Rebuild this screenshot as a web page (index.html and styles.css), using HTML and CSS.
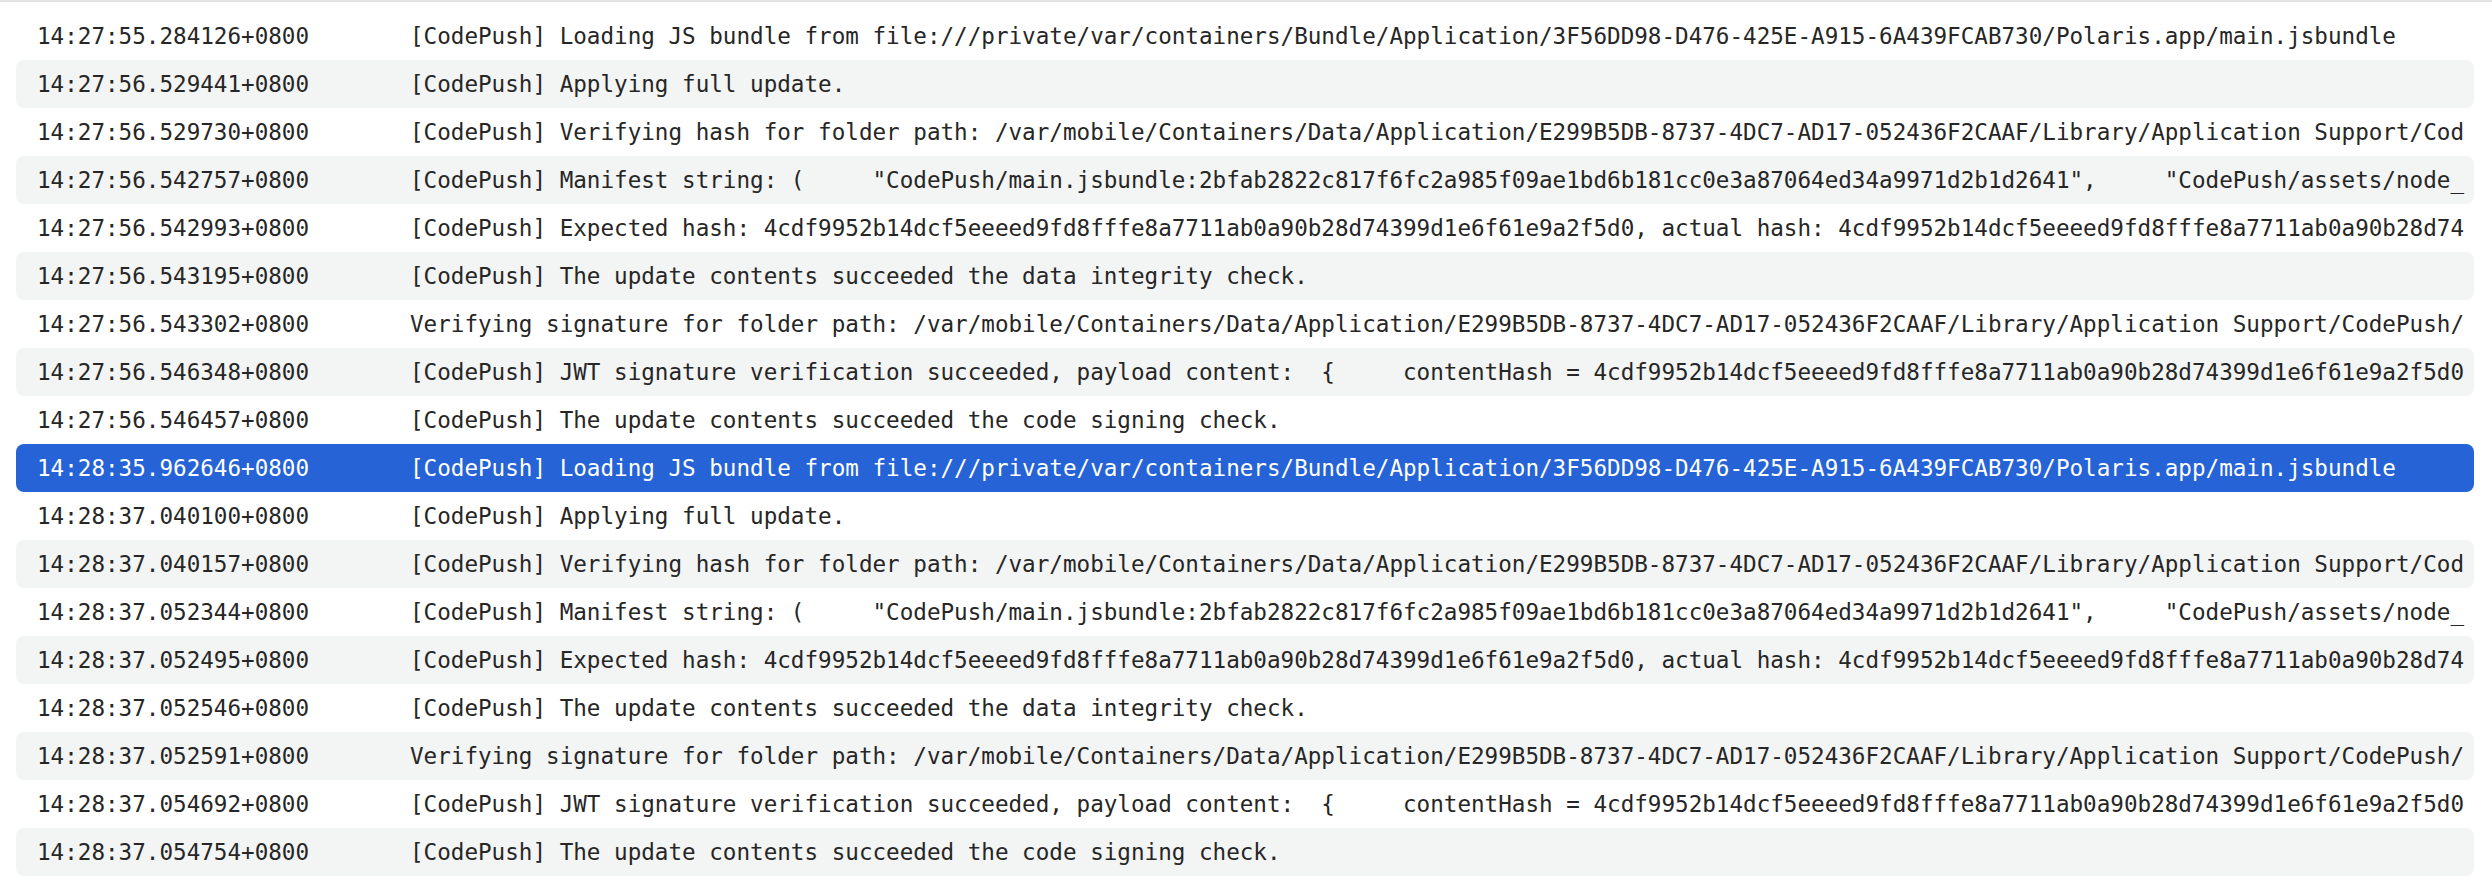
FILE: index.html
```html
<!DOCTYPE html>
<html lang="en">
<head>
  <meta charset="UTF-8">
  <meta name="viewport" content="width=device-width, initial-scale=1.0">
  <title>Console log</title>
  <link rel="stylesheet" href="styles.css">
</head>
<body>
  <main class="log__wrap">
    <ul class="log__list">
      <li class="log__row"><span class="log__time">14:27:55.284126+0800</span><span class="log__msg">[CodePush] Loading JS bundle from file:///private/var/containers/Bundle/Application/3F56DD98-D476-425E-A915-6A439FCAB730/Polaris.app/main.jsbundle</span></li>
      <li class="log__row"><span class="log__time">14:27:56.529441+0800</span><span class="log__msg">[CodePush] Applying full update.</span></li>
      <li class="log__row"><span class="log__time">14:27:56.529730+0800</span><span class="log__msg">[CodePush] Verifying hash for folder path: /var/mobile/Containers/Data/Application/E299B5DB-8737-4DC7-AD17-052436F2CAAF/Library/Application Support/Cod</span></li>
      <li class="log__row"><span class="log__time">14:27:56.542757+0800</span><span class="log__msg">[CodePush] Manifest string: (     "CodePush/main.jsbundle:2bfab2822c817f6fc2a985f09ae1bd6b181cc0e3a87064ed34a9971d2b1d2641",     "CodePush/assets/node_</span></li>
      <li class="log__row"><span class="log__time">14:27:56.542993+0800</span><span class="log__msg">[CodePush] Expected hash: 4cdf9952b14dcf5eeeed9fd8fffe8a7711ab0a90b28d74399d1e6f61e9a2f5d0, actual hash: 4cdf9952b14dcf5eeeed9fd8fffe8a7711ab0a90b28d74</span></li>
      <li class="log__row"><span class="log__time">14:27:56.543195+0800</span><span class="log__msg">[CodePush] The update contents succeeded the data integrity check.</span></li>
      <li class="log__row"><span class="log__time">14:27:56.543302+0800</span><span class="log__msg">Verifying signature for folder path: /var/mobile/Containers/Data/Application/E299B5DB-8737-4DC7-AD17-052436F2CAAF/Library/Application Support/CodePush/</span></li>
      <li class="log__row"><span class="log__time">14:27:56.546348+0800</span><span class="log__msg">[CodePush] JWT signature verification succeeded, payload content:  {     contentHash = 4cdf9952b14dcf5eeeed9fd8fffe8a7711ab0a90b28d74399d1e6f61e9a2f5d0</span></li>
      <li class="log__row"><span class="log__time">14:27:56.546457+0800</span><span class="log__msg">[CodePush] The update contents succeeded the code signing check.</span></li>
      <li class="log__row selected"><span class="log__time">14:28:35.962646+0800</span><span class="log__msg">[CodePush] Loading JS bundle from file:///private/var/containers/Bundle/Application/3F56DD98-D476-425E-A915-6A439FCAB730/Polaris.app/main.jsbundle</span></li>
      <li class="log__row"><span class="log__time">14:28:37.040100+0800</span><span class="log__msg">[CodePush] Applying full update.</span></li>
      <li class="log__row"><span class="log__time">14:28:37.040157+0800</span><span class="log__msg">[CodePush] Verifying hash for folder path: /var/mobile/Containers/Data/Application/E299B5DB-8737-4DC7-AD17-052436F2CAAF/Library/Application Support/Cod</span></li>
      <li class="log__row"><span class="log__time">14:28:37.052344+0800</span><span class="log__msg">[CodePush] Manifest string: (     "CodePush/main.jsbundle:2bfab2822c817f6fc2a985f09ae1bd6b181cc0e3a87064ed34a9971d2b1d2641",     "CodePush/assets/node_</span></li>
      <li class="log__row"><span class="log__time">14:28:37.052495+0800</span><span class="log__msg">[CodePush] Expected hash: 4cdf9952b14dcf5eeeed9fd8fffe8a7711ab0a90b28d74399d1e6f61e9a2f5d0, actual hash: 4cdf9952b14dcf5eeeed9fd8fffe8a7711ab0a90b28d74</span></li>
      <li class="log__row"><span class="log__time">14:28:37.052546+0800</span><span class="log__msg">[CodePush] The update contents succeeded the data integrity check.</span></li>
      <li class="log__row"><span class="log__time">14:28:37.052591+0800</span><span class="log__msg">Verifying signature for folder path: /var/mobile/Containers/Data/Application/E299B5DB-8737-4DC7-AD17-052436F2CAAF/Library/Application Support/CodePush/</span></li>
      <li class="log__row"><span class="log__time">14:28:37.054692+0800</span><span class="log__msg">[CodePush] JWT signature verification succeeded, payload content:  {     contentHash = 4cdf9952b14dcf5eeeed9fd8fffe8a7711ab0a90b28d74399d1e6f61e9a2f5d0</span></li>
      <li class="log__row"><span class="log__time">14:28:37.054754+0800</span><span class="log__msg">[CodePush] The update contents succeeded the code signing check.</span></li>
    </ul>
  </main>
</body>
</html>
```

FILE: styles.css
```css
* {
  margin: 0;
  padding: 0;
  box-sizing: border-box;
}

ul,
ol {
  list-style: none;
}

body {
  background: #fff;
  color: #262626;
  font-family: "DejaVu Sans Mono", "Liberation Mono", monospace;
  font-size: 22.6px;
}

.log__wrap {
  border-top: 2px solid #e4e4e4;
  padding: 10px 18px 18px 16px;
}

.log__row {
  display: grid;
  grid-template-columns: 373px minmax(0, 1fr);
  padding: 0 6px 0 21px;
  height: 48px;
  line-height: 48px;
  border-radius: 8px;
  white-space: pre;
}

.log__row:nth-child(even) {
  background-color: #f3f4f4;
}

.log__row.selected {
  background-color: #2563d6;
  color: #fff;
}

.log__msg {
  overflow: hidden;
}
```
